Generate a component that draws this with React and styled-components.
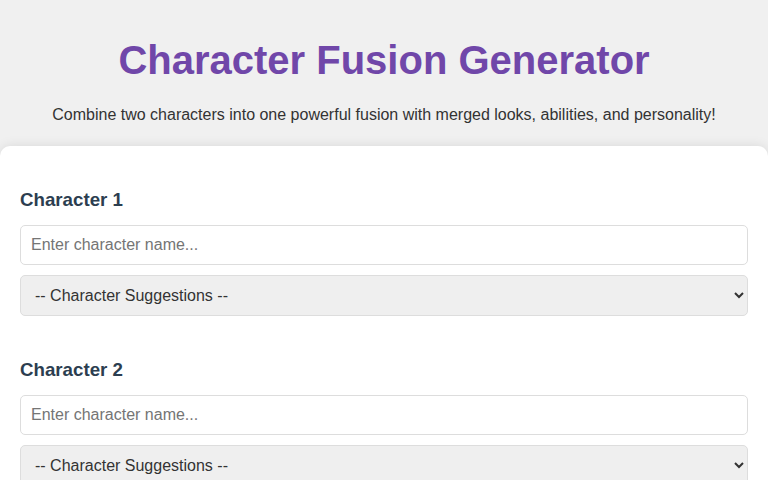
import styled, { createGlobalStyle } from 'styled-components';

const GlobalStyle = createGlobalStyle`
  body {
    margin: 0;
    background: #f0f0f0;
    font-family: "Liberation Sans", Arial, sans-serif;
    color: #333;
  }
`;

export default function App() {
  return (
    <>
      <GlobalStyle />
      <Page>
        <Header>
          <Title>Character Fusion Generator</Title>
          <Subtitle>Combine two characters into one powerful fusion with merged looks, abilities, and personality!</Subtitle>
        </Header>
        <Card>
          {[1, 2].map((n) => (
            <Section key={n}>
              <SectionTitle>Character {n}</SectionTitle>
              <Input type="text" placeholder="Enter character name..." />
              <Select defaultValue="">
                <option value="">-- Character Suggestions --</option>
              </Select>
            </Section>
          ))}
        </Card>
      </Page>
    </>
  );
}

const Page = styled.div`
  display: flex;
  flex-direction: column;
`;

const Header = styled.header`
  padding: 37px 20px 22px;
  text-align: center;
`;

const Title = styled.h1`
  margin: 0;
  font-size: 40px;
  line-height: 46px;
  font-weight: 700;
  color: #7047a9;
`;

const Subtitle = styled.p`
  margin: 23px 0 0;
  font-size: 16px;
  line-height: 18px;
  color: #333;
`;

const Card = styled.main`
  background: #fff;
  border-radius: 10px;
  box-shadow: 0 0 12px rgba(0, 0, 0, 0.1);
  padding: 43px 20px 20px;
  display: flex;
  flex-direction: column;
  gap: 43px;
`;

const Section = styled.section`
  display: flex;
  flex-direction: column;
  gap: 10px;
`;

const SectionTitle = styled.h3`
  margin: 0 0 5px;
  font-size: 18.72px;
  line-height: 21px;
  font-weight: 700;
  color: #2c3e50;
`;

const Input = styled.input`
  box-sizing: border-box;
  width: 100%;
  height: 40px;
  padding: 10px;
  border: 1px solid #ddd;
  border-radius: 5px;
  font-family: inherit;
  font-size: 16px;
  color: #333;
  &::placeholder {
    color: #757575;
  }
`;

const Select = styled.select`
  box-sizing: border-box;
  width: 100%;
  height: 41px;
  padding: 10px;
  border: 1px solid #ddd;
  border-radius: 5px;
  background-color: #efefef;
  font-family: inherit;
  font-size: 16px;
  color: #333;
`;
